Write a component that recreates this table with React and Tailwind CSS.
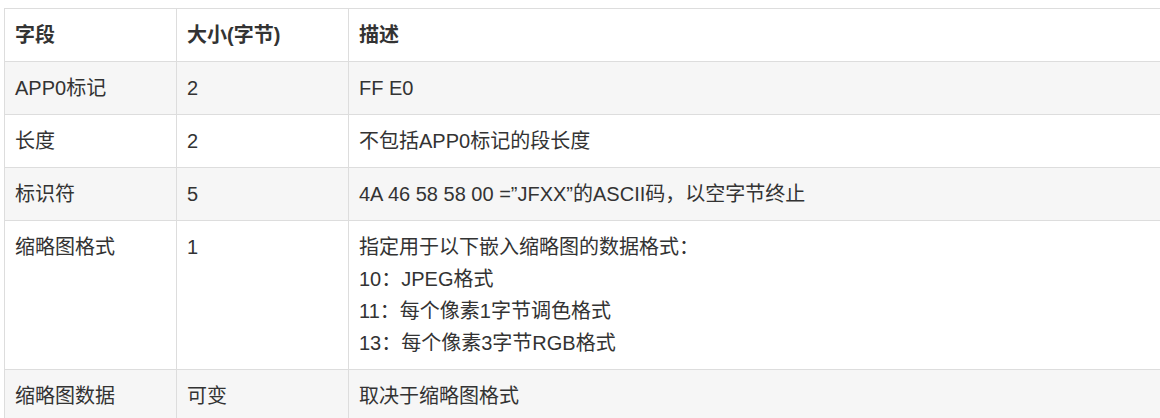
const rows = [
  { field: "APP0标记", size: "2", desc: ["FF E0"] },
  { field: "长度", size: "2", desc: ["不包括APP0标记的段长度"] },
  { field: "标识符", size: "5", desc: ["4A 46 58 58 00 =”JFXX”的ASCII码，以空字节终止"] },
  {
    field: "缩略图格式",
    size: "1",
    desc: [
      "指定用于以下嵌入缩略图的数据格式：",
      "10：JPEG格式",
      "11：每个像素1字节调色格式",
      "13：每个像素3字节RGB格式",
    ],
  },
  { field: "缩略图数据", size: "可变", desc: ["取决于缩略图格式"] },
];

export default function App() {
  return (
    <div className="h-[418px] w-[1160px] overflow-hidden bg-white pl-1 pt-2">
      <table
        className="w-[1200px] table-fixed border-collapse text-[20px] leading-[32px] text-[#333]"
        style={{ fontFamily: '"Liberation Sans", "Noto Sans CJK SC", sans-serif' }}
      >
        <colgroup>
          <col className="w-[172px]" />
          <col className="w-[172px]" />
          <col />
        </colgroup>
        <thead>
          <tr className="bg-white">
            <th className="border border-[#ddd] px-[10px] py-[10px] text-left font-bold">字段</th>
            <th className="border border-[#ddd] px-[10px] py-[10px] text-left font-bold">大小(字节)</th>
            <th className="border border-[#ddd] px-[10px] py-[10px] text-left font-bold">描述</th>
          </tr>
        </thead>
        <tbody>
          {rows.map((row, i) => (
            <tr className={i % 2 === 0 ? "bg-[#f6f6f6]" : "bg-white"} key={row.field}>
              <td className="border border-[#ddd] px-[10px] py-[10px] align-top">{row.field}</td>
              <td className="border border-[#ddd] px-[10px] py-[10px] align-top">{row.size}</td>
              <td className="border border-[#ddd] px-[10px] py-[10px] align-top">
                {row.desc.map((line) => (
                  <div key={line}>{line}</div>
                ))}
              </td>
            </tr>
          ))}
        </tbody>
      </table>
    </div>
  );
}
